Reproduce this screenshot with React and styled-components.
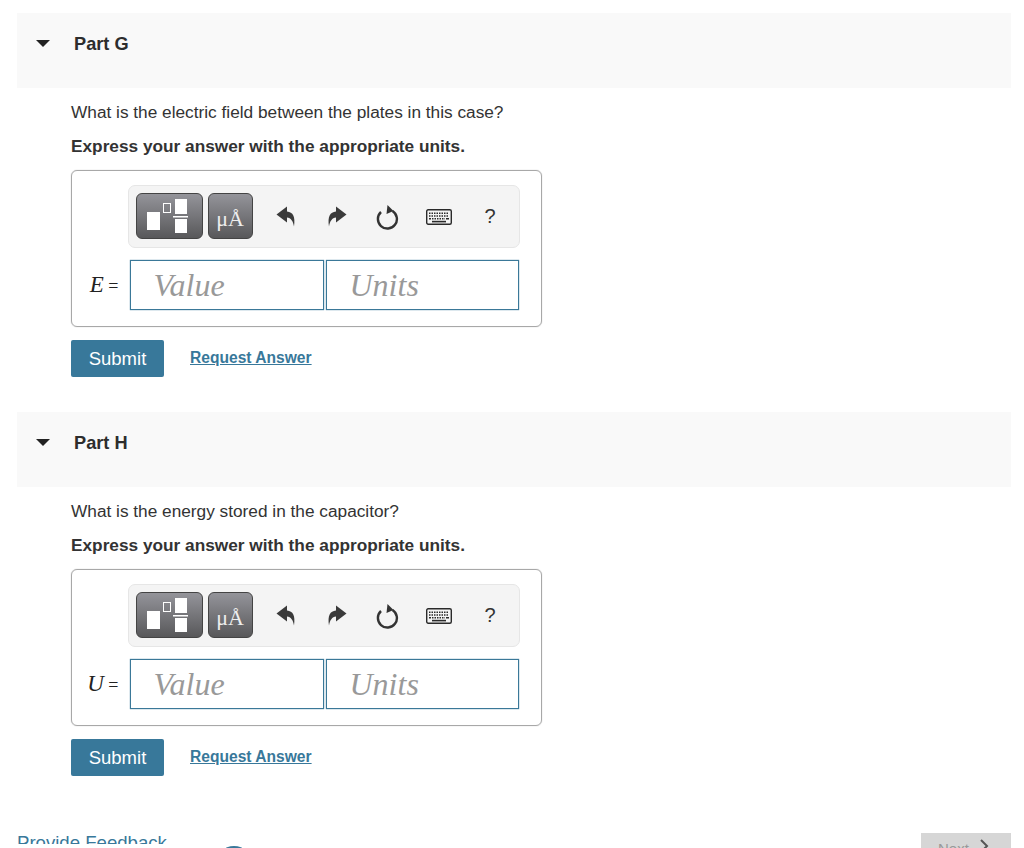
import React from "react";
import styled, { createGlobalStyle } from "styled-components";

const GlobalStyle = createGlobalStyle`
  html, body {
    margin: 0;
    padding: 0;
    height: 848px;
    overflow: hidden;
    background: #ffffff;
    font-family: "Liberation Sans", Arial, sans-serif;
    color: #333333;
  }
`;

const parts = [
  { title: "Part G", question: "What is the electric field between the plates in this case?", symbol: "E" },
  { title: "Part H", question: "What is the energy stored in the capacitor?", symbol: "U" },
];

const TemplateIcon = () => (
  <svg width="41" height="36" viewBox="0 0 41 36">
    <rect x="0" y="14" width="13" height="18" fill="#fff" />
    <rect x="16.5" y="5.5" width="7" height="9" fill="none" stroke="#fff" />
    <rect x="28" y="1" width="12" height="15" fill="#fff" />
    <rect x="26" y="18" width="15" height="1.5" fill="#fff" />
    <rect x="28" y="21" width="12" height="14" fill="#fff" />
  </svg>
);

const UndoIcon = ({ flip }) => (
  <svg width="20" height="22" viewBox="0 0 20 22" style={flip ? { transform: "scaleX(-1)" } : undefined}>
    <path d="M0.5 8.5 L11 0.5 V5.5 C17 6 19.5 10.5 18 20.5 C17 15 15 12 11 11.5 V16.5 Z" fill="#3a3a3a" />
  </svg>
);

const ResetIcon = () => (
  <svg width="24" height="26" viewBox="0 0 24 26">
    <path d="M5 8 A9.5 9.5 0 1 0 16.5 7" fill="none" stroke="#333" strokeWidth="2.4" />
    <path d="M11.5 1 L17.5 7 L10.5 10 Z" fill="#333" />
  </svg>
);

const KeyboardIcon = () => (
  <svg width="26" height="16" viewBox="0 0 26 16">
    <rect x="0.7" y="0.7" width="24.6" height="14.6" rx="1.5" fill="#f4f4f4" stroke="#2a2a2a" strokeWidth="1.4" />
    <path d="M3 4.2 H23 M3 7 H23" stroke="#2a2a2a" strokeWidth="1.6" strokeDasharray="1.5 1" />
    <path d="M3 9.8 H5 M20 9.8 H23" stroke="#2a2a2a" strokeWidth="1.6" />
    <path d="M6 9.8 H19" stroke="#2a2a2a" strokeWidth="1.6" strokeDasharray="1.5 1" />
    <path d="M6 12.6 H20" stroke="#2a2a2a" strokeWidth="1.6" />
  </svg>
);

const NextChevron = () => (
  <svg width="10" height="14" viewBox="0 0 10 14">
    <path d="M2 1 L8 7 L2 13" fill="none" stroke="#555" strokeWidth="2" />
  </svg>
);

const AnswerPart = ({ title, question, symbol }) => (
  <section>
    <PartHeader>
      <Caret />
      <PartTitle>{title}</PartTitle>
    </PartHeader>
    <PartBody>
      <Question>{question}</Question>
      <Instruction>Express your answer with the appropriate units.</Instruction>
      <AnswerBox>
        <Toolbar>
          <ToolButton $wide>
            <TemplateIcon />
          </ToolButton>
          <ToolButton>
            <MicroGlyph>μÅ</MicroGlyph>
          </ToolButton>
          <PlainTools>
            <PlainTool><UndoIcon /></PlainTool>
            <PlainTool><UndoIcon flip /></PlainTool>
            <PlainTool><ResetIcon /></PlainTool>
            <PlainTool><KeyboardIcon /></PlainTool>
            <HelpTool>?</HelpTool>
          </PlainTools>
        </Toolbar>
        <InputRow>
          <Equation>
            <Variable>{symbol}</Variable> =
          </Equation>
          <Field $width={194}>Value</Field>
          <Field $width={193}>Units</Field>
        </InputRow>
      </AnswerBox>
      <Actions>
        <SubmitButton>Submit</SubmitButton>
        <RequestLink href="#">Request Answer</RequestLink>
      </Actions>
    </PartBody>
  </section>
);

export default function App() {
  return (
    <Page>
      <GlobalStyle />
      {parts.map((part) => (
        <AnswerPart key={part.title} {...part} />
      ))}
      <Footer>
        <FeedbackLink href="#">Provide Feedback</FeedbackLink>
        <RoundBadge />
        <NextButton>
          <NextLabel>Next</NextLabel>
          <NextChevron />
        </NextButton>
      </Footer>
    </Page>
  );
}

const Page = styled.div`
  box-sizing: border-box;
  height: 848px;
  overflow: hidden;
  padding: 13px 13px 0 17px;
`;

const PartHeader = styled.div`
  display: flex;
  align-items: center;
  height: 75px;
  padding: 0 0 14px 19px;
  box-sizing: border-box;
  background: #f9f9f9;
`;

const Caret = styled.span`
  width: 0;
  height: 0;
  border-left: 7px solid transparent;
  border-right: 7px solid transparent;
  border-top: 7px solid #222222;
  margin-right: 24px;
`;

const PartTitle = styled.h2`
  margin: 2px 0 0;
  font-size: 18.2px;
  font-weight: 700;
  color: #2d2d2d;
`;

const PartBody = styled.div`
  padding: 14px 0 35px 54px;
`;

const Question = styled.p`
  margin: 0 0 14px;
  font-size: 17.25px;
  line-height: 20px;
`;

const Instruction = styled.p`
  margin: 0 0 14px;
  font-size: 17.25px;
  line-height: 20px;
  font-weight: 700;
`;

const AnswerBox = styled.div`
  box-sizing: border-box;
  width: 471px;
  height: 157px;
  padding-top: 14px;
  border: 1px solid #a8a8a8;
  border-radius: 6px;
  box-shadow: 0 0 1px #a8a8a8;
`;

const Toolbar = styled.div`
  box-sizing: border-box;
  display: flex;
  align-items: center;
  gap: 5px;
  width: 392px;
  height: 63px;
  margin-left: 56px;
  padding: 0 0 2px 6.5px;
  background: #f4f4f4;
  border: 1.5px solid #e6e6e6;
  border-radius: 7px;
`;

const ToolButton = styled.div`
  box-sizing: border-box;
  display: flex;
  align-items: center;
  justify-content: center;
  width: ${(props) => (props.$wide ? "67px" : "45px")};
  height: 46px;
  padding-right: ${(props) => (props.$wide ? "3px" : "0")};
  background: linear-gradient(#94949a, #58585a);
  border: 1px solid #444444;
  border-radius: 6px;
`;

const MicroGlyph = styled.span`
  font-family: "Liberation Serif", serif;
  font-size: 22px;
  color: #eeeeee;
  margin-top: 6px;
`;

const PlainTools = styled.div`
  display: flex;
  align-items: center;
  flex: 1;
  margin: 2px 0 0 3px;
`;

const PlainTool = styled.div`
  display: flex;
  align-items: center;
  justify-content: center;
  width: 51px;
`;

const HelpTool = styled(PlainTool)`
  font-size: 20px;
  color: #333333;
`;

const InputRow = styled.div`
  display: flex;
  align-items: center;
  gap: 2px;
  margin-top: 12px;
`;

const Equation = styled.div`
  box-sizing: border-box;
  width: 55.5px;
  padding-right: 9px;
  white-space: nowrap;
  text-align: right;
  font-family: "Liberation Serif", serif;
  font-size: 18px;
  color: #222222;
`;

const Variable = styled.i`
  font-size: 23px;
`;

const Field = styled.div`
  box-sizing: border-box;
  width: ${(props) => props.$width}px;
  height: 50px;
  padding-left: 23px;
  line-height: 48px;
  font-family: "Liberation Serif", serif;
  font-style: italic;
  font-size: 32px;
  color: #999999;
  border: 1px solid #3a7898;
  box-shadow: 0 0 1px #3a7898;
`;

const Actions = styled.div`
  display: flex;
  align-items: center;
  gap: 26px;
  margin-top: 13px;
`;

const SubmitButton = styled.button`
  width: 93px;
  height: 37px;
  padding: 0;
  font-family: inherit;
  font-size: 18.5px;
  color: #ffffff;
  background: #38789a;
  border: none;
  border-radius: 2px;
`;

const RequestLink = styled.a`
  margin-top: -2px;
  font-size: 15.6px;
  font-weight: 700;
  color: #38789a;
`;

const Footer = styled.div`
  display: flex;
  align-items: flex-start;
  height: 40px;
  margin-top: 22px;
`;

const FeedbackLink = styled.a`
  display: block;
  height: 11px;
  overflow: hidden;
  font-size: 18.6px;
  line-height: 20px;
  color: #38789a;
  text-decoration: none;
`;

const RoundBadge = styled.span`
  width: 36px;
  height: 36px;
  margin: 12.5px 0 0 49px;
  border-radius: 50%;
  background: #38789a;
`;

const NextButton = styled.div`
  box-sizing: border-box;
  display: flex;
  align-items: flex-start;
  gap: 10px;
  width: 90px;
  height: 40px;
  margin-left: auto;
  padding: 5.5px 0 0 17px;
  background: #d6d6d6;
`;

const NextLabel = styled.span`
  font-size: 15px;
  line-height: 20px;
  color: #999999;
`;
